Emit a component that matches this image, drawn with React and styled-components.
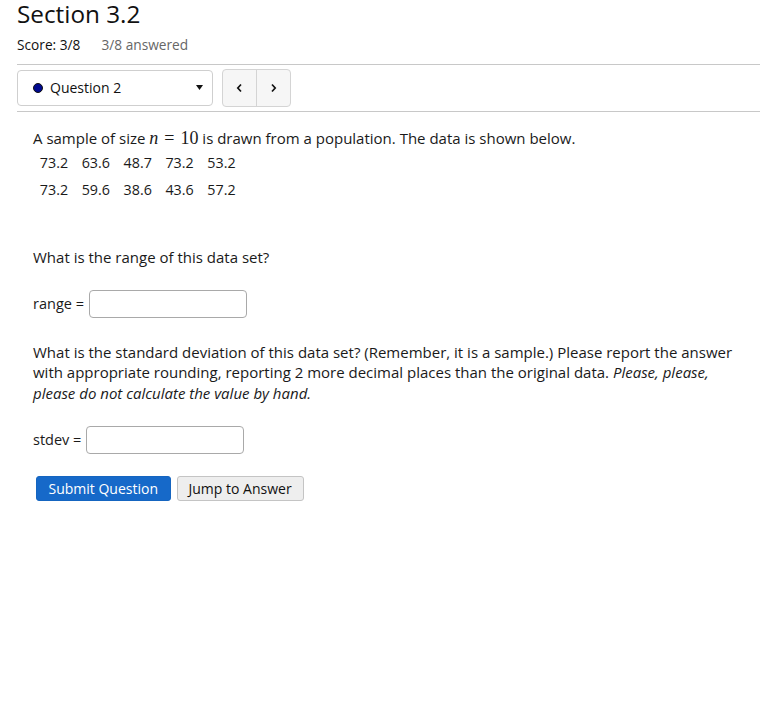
import React from "react";
import styled, { createGlobalStyle } from "styled-components";

const Global = createGlobalStyle`
  html, body {
    margin: 0;
    padding: 0;
    background: #fff;
  }
  body {
    font-family: "Open Sans", "Noto Sans", sans-serif;
    color: #212121;
  }
`;

const data = [
  ["73.2", "63.6", "48.7", "73.2", "53.2"],
  ["73.2", "59.6", "38.6", "43.6", "57.2"],
];

const Page = styled.div`
  padding-left: 17px;
  width: 743px;
`;

const Title = styled.h1`
  margin: 0;
  font-size: 24.3px;
  font-weight: 400;
  line-height: 28.8px;
  color: #111;
`;

const ScoreRow = styled.div`
  display: flex;
  gap: 21px;
  margin-top: 7px;
  font-size: 13.7px;
  line-height: 17.7px;
`;

const Score = styled.span`
  color: ${(p) => (p.muted ? "#666" : "#111")};
`;

const Rule = styled.div`
  height: 1px;
  background: #c8c8c8;
  margin-top: ${(p) => p.top || 0}px;
`;

const Toolbar = styled.div`
  display: flex;
  align-items: center;
  gap: 9px;
  padding: 4px 0 4px;
`;

const Select = styled.div`
  box-sizing: border-box;
  width: 196px;
  height: 36px;
  border: 1px solid #cfcfcf;
  border-radius: 4px;
  display: flex;
  align-items: center;
  padding: 0 9px 0 15px;
  font-size: 14px;
  color: #111;
`;

const Dot = styled.span`
  width: 10px;
  height: 10px;
  border-radius: 50%;
  background: #00098f;
  border: 1px solid #111;
  box-sizing: border-box;
  margin-right: 7px;
`;

const SelectLabel = styled.span`
  flex: 1;
`;

const NavGroup = styled.div`
  display: flex;
  height: 36px;
  border: 1px solid #d4d4d4;
  border-radius: 4px;
  overflow: hidden;
  background: #f6f6f6;
`;

const NavButton = styled.div`
  width: 33px;
  display: flex;
  align-items: center;
  justify-content: center;
  & + & {
    border-left: 1px solid #d4d4d4;
  }
`;

const Question = styled.div`
  padding-left: 16px;
  font-size: 15px;
  line-height: 20px;
  color: #1a1a1a;
`;

const Para = styled.p`
  margin: ${(p) => p.top}px 0 0;
  line-height: ${(p) => p.lh || 20}px;
  width: 712px;
`;

const MathVar = styled.span`
  font-family: "Liberation Serif", "DejaVu Serif", serif;
  font-style: italic;
  font-size: 18px;
`;

const MathNum = styled.span`
  font-family: "Liberation Serif", "DejaVu Serif", serif;
  font-size: 18px;
  margin: 0 ${(p) => p.space || 0}px;
`;

const DataTable = styled.table`
  border-collapse: collapse;
  margin-top: 2px;
`;

const Cell = styled.td`
  padding: 0 6.8px;
  height: 27px;
  font-size: 14.3px;
`;

const AnswerRow = styled.div`
  display: flex;
  align-items: center;
  gap: 5px;
  margin-top: ${(p) => p.top}px;
  font-size: 14.5px;
`;

const Input = styled.input`
  box-sizing: border-box;
  width: 158px;
  height: 28px;
  border: 1px solid #a9a9a9;
  border-radius: 4px;
  font-family: inherit;
  font-size: 14px;
  padding: 0 6px;
  background: #fff;
`;

const Buttons = styled.div`
  display: flex;
  gap: 6px;
  margin: 22px 0 0 3px;
`;

const Button = styled.button`
  box-sizing: border-box;
  height: 25px;
  padding: 0 ${(p) => (p.primary ? 11.5 : 11)}px;
  font-family: inherit;
  font-size: 14px;
  border-radius: 3px;
  border: 1px solid ${(p) => (p.primary ? "#1565c0" : "#c4c4c4")};
  background: ${(p) => (p.primary ? "#1669c9" : "#eeeeee")};
  color: ${(p) => (p.primary ? "#fff" : "#111")};
`;

const Chevron = ({ dir }) => (
  <svg width="7" height="10" viewBox="0 0 7 10">
    <path
      d={dir === "left" ? "M5 1.5 L1.8 5 L5 8.5" : "M2 1.5 L5.2 5 L2 8.5"}
      fill="none"
      stroke="#111"
      strokeWidth="1.7"
    />
  </svg>
);

export default function App() {
  return (
    <>
      <Global />
      <Page>
        <Title>Section 3.2</Title>
        <ScoreRow>
          <Score>Score: 3/8</Score>
          <Score muted>3/8 answered</Score>
        </ScoreRow>
        <Rule top={10} />
        <Toolbar>
          <Select>
            <Dot />
            <SelectLabel>Question 2</SelectLabel>
            <svg width="7" height="5" viewBox="0 0 7 5">
              <polygon points="0,0 7,0 3.5,5" fill="#111" />
            </svg>
          </Select>
          <NavGroup>
            <NavButton>
              <Chevron dir="left" />
            </NavButton>
            <NavButton>
              <Chevron dir="right" />
            </NavButton>
          </NavGroup>
        </Toolbar>
        <Rule />
        <Question>
          <Para top={16}>
            A sample of size <MathVar>n</MathVar>
            <MathNum space={6}>=</MathNum>
            <MathNum>10</MathNum> is drawn from a population. The data is
            shown below.
          </Para>
          <DataTable>
            <tbody>
              {data.map((row, i) => (
                <tr key={i}>
                  {row.map((v, j) => (
                    <Cell key={j}>{v}</Cell>
                  ))}
                </tr>
              ))}
            </tbody>
          </DataTable>
          <Para top={43}>What is the range of this data set?</Para>
          <AnswerRow top={23}>
            range = <Input />
          </AnswerRow>
          <Para top={24} lh={20.5}>
            What is the standard deviation of this data set? (Remember, it is
            a sample.) Please report the answer with appropriate rounding,
            reporting 2 more decimal places than the original data.{" "}
            <em>Please, please, please do not calculate the value by hand.</em>
          </Para>
          <AnswerRow top={23}>
            stdev = <Input />
          </AnswerRow>
          <Buttons>
            <Button primary>Submit Question</Button>
            <Button>Jump to Answer</Button>
          </Buttons>
        </Question>
      </Page>
    </>
  );
}
